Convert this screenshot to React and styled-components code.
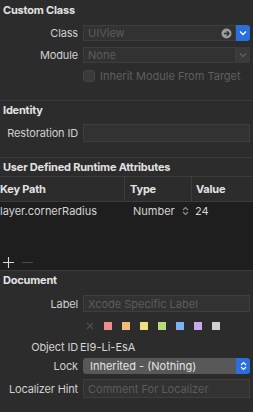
import React from 'react'
import styled, { createGlobalStyle } from 'styled-components'

const Global = createGlobalStyle`
  html, body { margin: 0; padding: 0; background: #2c2c2c; }
  body { font-family: Inter, "Noto Sans", "Liberation Sans", sans-serif; font-size: 11px; color: #d2d2d2; }
`

const Panel = styled.div`
  width: 253px;
  height: 412px;
  background: #2c2c2c;
  overflow: hidden;
`

const Section = styled.div`
  padding-bottom: ${p => p.$pb ?? 0}px;
  border-top: ${p => (p.$line ? '1px solid #3c3c3c' : 'none')};
`

const Header = styled.div`
  height: ${p => p.$h ?? 18}px;
  line-height: ${p => p.$h ?? 18}px;
  padding-left: 3px;
  font-weight: 700;
  font-size: 11px;
  color: #e2e2e2;
  letter-spacing: -0.2px;
`

const Row = styled.div`
  display: flex;
  align-items: center;
  height: ${p => p.$h ?? 16}px;
  margin-top: ${p => p.$mt ?? 0}px;
  padding-right: 3px;
`

const Label = styled.div`
  width: 83px;
  flex: none;
  box-sizing: border-box;
  display: flex;
  justify-content: flex-end;
  padding-right: 5px;
  color: #d0d0d0;
  letter-spacing: -0.15px;
  white-space: nowrap;
`

const Field = styled.div`
  flex: 1;
  height: 100%;
  box-sizing: border-box;
  display: flex;
  align-items: center;
  background: #323232;
  border: 1px solid #3e3e3e;
  padding-left: 4px;
  padding-right: 3px;
  color: ${p => (p.$placeholder ? '#5c5c5c' : '#d0d0d0')};
`

const FieldText = styled.span`
  flex: 1;
  white-space: nowrap;
  overflow: hidden;
`

const Side = styled.div`
  width: 14px;
  flex: none;
  height: 100%;
  display: flex;
  align-items: center;
  justify-content: center;
  background: ${p => p.$bg};
  border-radius: ${p => (p.$round ? '0 3px 3px 0' : '0')};
`

const Popup = styled.div`
  flex: 1;
  height: 100%;
  display: flex;
  align-items: center;
  background: #585858;
  border-radius: 3px 0 0 3px;
  padding-left: 7px;
  color: #e4e4e4;
  overflow: hidden;
  white-space: nowrap;
`

const Checkbox = styled.div`
  width: 12px;
  height: 12px;
  box-sizing: border-box;
  border-radius: 3px;
  background: #3a3a3a;
  border: 1px solid #444;
  margin-right: 5px;
`

const Dim = styled.span`
  color: #5f5f5f;
  white-space: nowrap;
`

const THead = styled.div`
  display: flex;
  height: 24px;
  border-top: 1px solid #3c3c3c;
  border-bottom: 1px solid #3c3c3c;
`

const TH = styled.div`
  flex: ${p => (p.$w ? 'none' : '1')};
  width: ${p => (p.$w ? `${p.$w}px` : 'auto')};
  box-sizing: border-box;
  display: flex;
  align-items: center;
  padding-left: ${p => p.$pl ?? 5}px;
  font-weight: 700;
  letter-spacing: -0.2px;
  color: #e2e2e2;
  border-left: ${p => (p.$first ? 'none' : '1px solid #3c3c3c')};
`

const TBody = styled.div`
  background: #1e1e1e;
  height: 68px;
  display: flex;
  flex-direction: column;
`

const TRow = styled.div`
  display: flex;
  height: 17px;
  align-items: center;
  color: #d4d4d4;
`

const Cell = styled.div`
  flex: ${p => (p.$w ? 'none' : '1')};
  width: ${p => (p.$w ? `${p.$w}px` : 'auto')};
  box-sizing: border-box;
  padding-left: ${p => p.$pl ?? 0}px;
  display: flex;
  align-items: center;
  gap: 7px;
  white-space: nowrap;
`

const Tools = styled.div`
  margin-top: auto;
  height: 16px;
  display: flex;
  align-items: center;
  gap: 8px;
  padding-left: 3px;
`

const Swatches = styled.div`
  display: flex;
  align-items: center;
  gap: 10px;
  padding-left: 3px;
`

const Swatch = styled.div`
  width: 8px;
  height: 8px;
  background: ${p => p.$c};
`

const Value = styled.div`
  margin-left: -3px;
  color: #d6d6d6;
`

const ArrowCircle = () => (
  <svg width="11" height="11" viewBox="0 0 11 11">
    <circle cx="5.5" cy="5.5" r="5" fill="#9c9c9c" />
    <path d="M3 5.5h5M5.8 3.3l2.2 2.2-2.2 2.2" stroke="#323232" strokeWidth="1.4" fill="none" />
  </svg>
)

const ChevronDown = ({ color }) => (
  <svg width="8" height="6" viewBox="0 0 8 6">
    <path d="M1 1.5l3 3 3-3" stroke={color} strokeWidth="1.3" fill="none" />
  </svg>
)

const UpDown = ({ color }) => (
  <svg width="7" height="10" viewBox="0 0 7 10">
    <path d="M1 4l2.5-2.5L6 4M1 6l2.5 2.5L6 6" stroke={color} strokeWidth="1.2" fill="none" />
  </svg>
)

const Plus = () => (
  <svg width="11" height="11" viewBox="0 0 11 11">
    <path d="M5.5 0v11M0 5.5h11" stroke="#d8d8d8" strokeWidth="1.1" />
  </svg>
)

const Minus = () => (
  <svg width="11" height="11" viewBox="0 0 11 11">
    <path d="M0 5.5h11" stroke="#4a4a4a" strokeWidth="1.1" />
  </svg>
)

const Cross = () => (
  <svg width="8" height="8" viewBox="0 0 8 8">
    <path d="M1 1l6 6M7 1l-6 6" stroke="#4e4e4e" strokeWidth="1.3" />
  </svg>
)

const colors = ['#ea8f8c', '#f2b97c', '#eee07c', '#b9db79', '#7fb3ef', '#c9a8e6', '#cfcfcf']

export default function App() {
  return (
    <>
      <Global />
      <Panel>
        <Section $pb={18}>
          <Header $h={20}>Custom Class</Header>
          <Row $mt={5} $h={16}>
            <Label>Class</Label>
            <Field $placeholder>
              <FieldText>UIView</FieldText>
              <ArrowCircle />
            </Field>
            <Side $bg="#2a6fdc" $round>
              <ChevronDown color="#fff" />
            </Side>
          </Row>
          <Row $mt={6} $h={16}>
            <Label>Module</Label>
            <Field $placeholder>
              <FieldText>None</FieldText>
            </Field>
            <Side $bg="#3a3a3a">
              <ChevronDown color="#5e5e5e" />
            </Side>
          </Row>
          <Row $mt={7} $h={12}>
            <Label />
            <Checkbox />
            <Dim>Inherit Module From Target</Dim>
          </Row>
        </Section>

        <Section $line $pb={15}>
          <Header $h={18}>Identity</Header>
          <Row $mt={5} $h={18}>
            <Label>Restoration ID</Label>
            <Field />
          </Row>
        </Section>

        <Section $line>
          <Header $h={18}>User Defined Runtime Attributes</Header>
          <THead>
            <TH $first $w={124} $pl={0}>Key Path</TH>
            <TH $w={67} $pl={5}>Type</TH>
            <TH $pl={4}>Value</TH>
          </THead>
          <TBody>
            <TRow>
              <Cell $w={124}>layer.cornerRadius</Cell>
              <Cell $w={71} $pl={9}>Number<UpDown color="#8a8a8a" /></Cell>
              <Cell>24</Cell>
            </TRow>
            <Tools>
              <Plus />
              <Minus />
            </Tools>
          </TBody>
        </Section>

        <Section $line>
          <Header $h={18}>Document</Header>
          <Row $mt={6} $h={17}>
            <Label>Label</Label>
            <Field $placeholder>
              <FieldText>Xcode Specific Label</FieldText>
            </Field>
          </Row>
          <Row $mt={8} $h={12}>
            <Label />
            <Swatches>
              <Cross />
              {colors.map(c => <Swatch key={c} $c={c} />)}
            </Swatches>
          </Row>
          <Row $mt={8} $h={14}>
            <Label>Object ID</Label>
            <Value>EI9-Li-EsA</Value>
          </Row>
          <Row $mt={4} $h={16}>
            <Label>Lock</Label>
            <Popup>Inherited - (Nothing)</Popup>
            <Side $bg="#2a6fdc" $round>
              <UpDown color="#fff" />
            </Side>
          </Row>
          <Row $mt={5} $h={19}>
            <Label>Localizer Hint</Label>
            <Field $placeholder>
              <FieldText>Comment For Localizer</FieldText>
            </Field>
          </Row>
        </Section>
      </Panel>
    </>
  )
}
